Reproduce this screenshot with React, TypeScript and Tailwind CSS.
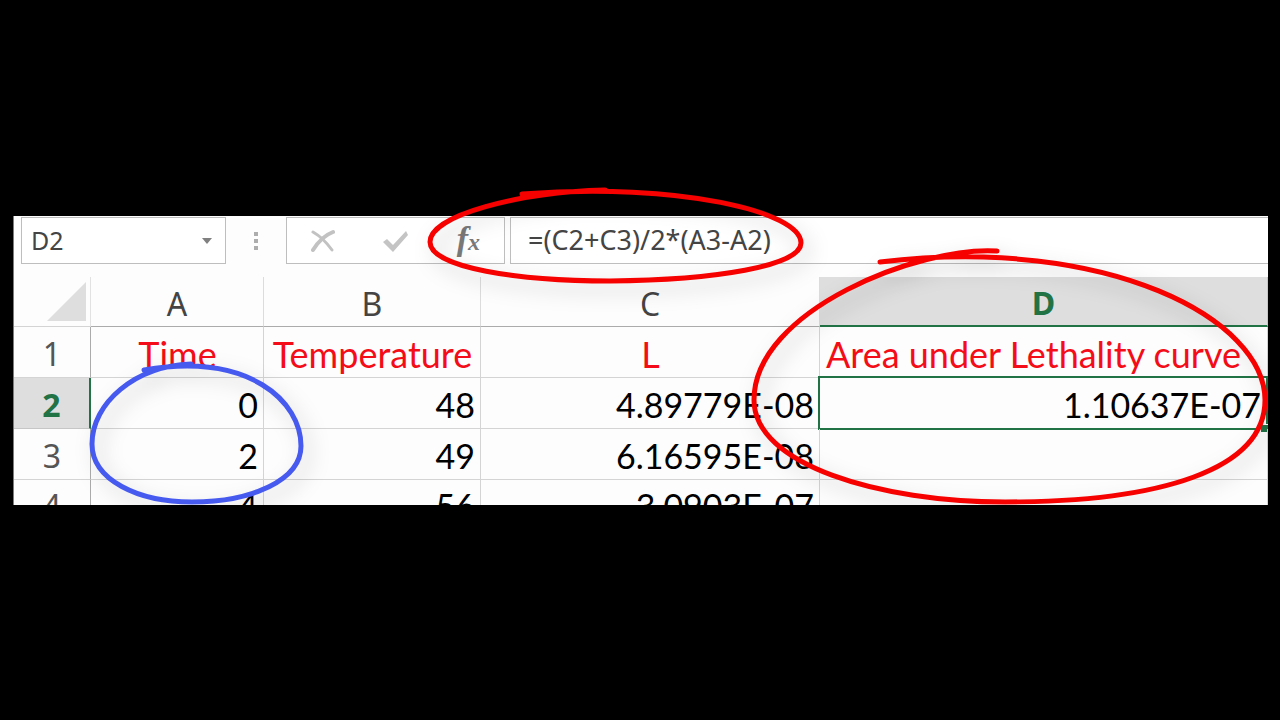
import React from 'react';

const rows = [
  { id: 2, cells: ['0', '48', '4.89779E-08', '1.10637E-07'] },
  { id: 3, cells: ['2', '49', '6.16595E-08', ''] },
];

const lastRow = { id: 4, cells: ['4', '56', '3.0903E-07', ''] };

const columns = ['A', 'B', 'C', 'D'];
const titles = ['Time', 'Temperature', 'L', 'Area under Lethality curve'];

const FormulaBar: React.FC = () => (
  <div className="flex h-12 pl-[7px] pt-px font-['Noto_Sans',sans-serif] text-[#444]">
    <div className="flex w-[205px] items-center border border-[#bebebe] bg-white">
      <input
        aria-label="Name box"
        defaultValue="D2"
        className="w-0 flex-1 bg-transparent pl-[9px] text-[25px] outline-none"
      />
      <button type="button" aria-label="Show names" className="px-3">
        <svg className="h-2 w-3" viewBox="0 0 12 8">
          <path d="M1 1h10L6 7z" fill="#808080" />
        </svg>
      </button>
    </div>
    <div className="flex w-[60px] flex-col items-center justify-center gap-[3px]">
      <span className="size-1 bg-[#adadad]" />
      <span className="size-1 bg-[#adadad]" />
      <span className="size-1 bg-[#adadad]" />
    </div>
    <div className="flex w-[219px] items-center justify-between border border-[#bebebe] bg-white pl-6 pr-6">
      <button type="button" aria-label="Cancel">
        <svg className="h-6 w-6" viewBox="0 0 24 24" fill="none" stroke="#c2c2c2" strokeLinecap="round">
          <path d="M2 3C9 7 16 14 21 21" strokeWidth="3" />
          <path d="M22 3C14 6 7 13 2 21" strokeWidth="4" />
        </svg>
      </button>
      <button type="button" aria-label="Enter">
        <svg className="h-6 w-7" viewBox="0 0 28 24" fill="#c4c4c4">
          <path d="M1 13l4-3 6 6L24 2l2 4-15 17z" />
        </svg>
      </button>
      <button
        type="button"
        aria-label="Insert function"
        className="font-['Liberation_Serif',serif] text-[34px] font-bold italic leading-8 text-[#7a7a7a]"
      >
        f<span className="text-2xl">x</span>
      </button>
    </div>
    <input
      aria-label="Formula"
      defaultValue="=(C2+C3)/2*(A3-A2)"
      className="ml-[5px] w-0 flex-1 border-y border-l border-[#bebebe] bg-white pl-[17px] text-[27px] outline-none"
    />
  </div>
);

const Grid: React.FC = () => (
  <table className="mt-[13px] w-full table-fixed border-separate border-spacing-0 font-[Lato,sans-serif] text-[34px] leading-[46px] text-black">
    <colgroup>
      <col className="w-[77px]" />
      <col className="w-[173px]" />
      <col className="w-[217px]" />
      <col className="w-[339px]" />
      <col />
    </colgroup>
    <thead>
      <tr className="h-[50px] font-['Noto_Sans',sans-serif] text-[32px] leading-[45px] text-[#444]">
        <td className="border-b border-r border-b-[#d4d4d4] border-r-[#e2e2e2] p-0">
          <svg className="ml-auto mr-1 h-10 w-10" viewBox="0 0 40 40">
            <path d="M40 0v39H1z" fill="#dedede" />
          </svg>
        </td>
        {columns.map((name) => (
          <th
            key={name}
            scope="col"
            className={
              name === 'D'
                ? 'border-b-2 border-r border-b-[#217346] border-r-[#c6c6c6] bg-[#dedede] p-0 pt-[3px] font-bold text-[#217346]'
                : 'border-b border-r border-b-[#ababab] border-r-[#dcdcdc] p-0 pt-[3px] font-normal'
            }
          >
            {name}
          </th>
        ))}
      </tr>
    </thead>
    <tbody>
      <tr className="text-[36px] text-[#f40d18]">
        <th
          scope="row"
          className="border-b border-r border-b-[#d4d4d4] border-r-[#ababab] p-0 pt-1 font-['Noto_Sans',sans-serif] text-[32px] font-normal text-[#555]"
        >
          1
        </th>
        {titles.map((title) => (
          <td
            key={title}
            className="whitespace-nowrap border-b border-r border-[#d4d4d4] p-0 pl-[6px] pr-[5px] pt-1 text-center last:text-left"
          >
            {title}
          </td>
        ))}
      </tr>
      {rows.map((row) => (
        <tr key={row.id}>
          <th
            scope="row"
            className={
              row.id === 2
                ? "border-b border-r-2 border-b-[#c6c6c6] border-r-[#217346] bg-[#dedede] p-0 pt-1 font-['Noto_Sans',sans-serif] text-[32px] font-bold text-[#217346]"
                : "border-b border-r border-b-[#d4d4d4] border-r-[#ababab] p-0 pt-1 font-['Noto_Sans',sans-serif] text-[32px] font-normal text-[#555]"
            }
          >
            {row.id}
          </th>
          {row.cells.map((value, i) => (
            <td
              key={columns[i]}
              className="relative border-b border-r border-[#d4d4d4] p-0 pr-[5px] pt-1 text-right last:pr-[6px]"
            >
              {value}
              {row.id === 2 && columns[i] === 'D' && (
                <div className="absolute -bottom-0.5 -left-0.5 -right-px -top-0.5 border-2 border-[#217346]">
                  <span className="absolute -bottom-1 -right-0.5 size-2 border-l border-t border-white bg-[#217346]" />
                </div>
              )}
            </td>
          ))}
        </tr>
      ))}
      <tr>
        <th
          scope="row"
          className="border-r border-[#ababab] p-0 pt-[3px] font-['Noto_Sans',sans-serif] text-[32px] font-normal text-[#555]"
        >
          <div className="h-[22px] overflow-hidden">{lastRow.id}</div>
        </th>
        {lastRow.cells.map((value, i) => (
          <td key={columns[i]} className="border-r border-[#d4d4d4] p-0 pr-[5px] pt-[3px] text-right">
            <div className="h-[22px] overflow-hidden">{value}</div>
          </td>
        ))}
      </tr>
    </tbody>
  </table>
);

// Hand-drawn rings around the formula, the time values and the area column
const Markup: React.FC = () => (
  <svg
    aria-hidden="true"
    className="pointer-events-none absolute inset-0 h-full w-full overflow-visible drop-shadow-[6px_8px_10px_rgba(0,0,0,0.2)]"
    viewBox="13 216 1255 289"
    preserveAspectRatio="none"
    fill="none"
    strokeWidth="5"
    strokeLinecap="round"
  >
    <path
      stroke="#f60000"
      d="M605 190C520 192 430 215 430 242C430 268 520 281 610 281C715 280 801 266 801 243C801 212 680 182 522 194"
    />
    <path
      stroke="#465af0"
      d="M191 364C135 366 92 403 92 444C92 480 138 502 192 502C252 502 301 480 301 446C301 402 250 352 144 370"
    />
    <path
      stroke="#f60000"
      d="M997 251C920 246 754 310 754 400C754 465 880 502 1005 502C1160 502 1265 470 1265 400C1265 320 1110 235 880 262"
    />
  </svg>
);

const App: React.FC = () => {
  return (
    <main className="flex min-h-screen items-center bg-black pl-[13px] pr-3 pt-px">
      <div className="relative w-full">
        <div className="overflow-hidden border-l border-[#5b8f75] bg-[#fdfdfd]">
          <FormulaBar />
          <Grid />
        </div>
        <Markup />
      </div>
    </main>
  );
};

export default App;
